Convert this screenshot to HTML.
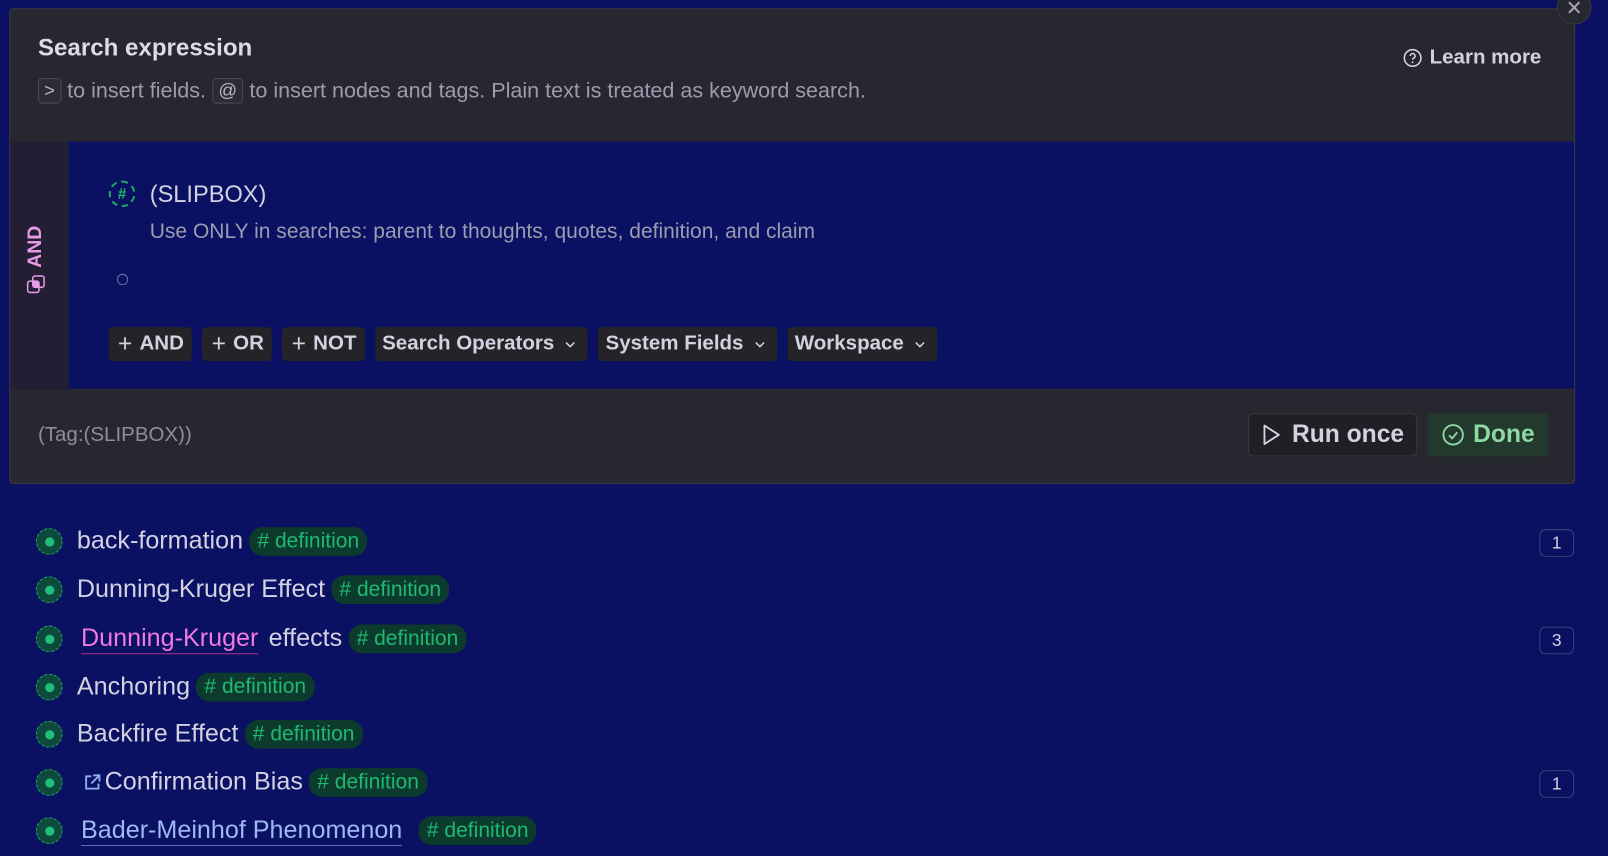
<!DOCTYPE html>
<html><head><meta charset="utf-8"><style>
*{box-sizing:border-box;margin:0;padding:0}
html,body{width:1608px;height:856px;overflow:hidden;background:#0a1062}
body{font-family:"Liberation Sans",sans-serif;color:#d4d2e0}
#w{position:absolute;left:0;top:0;width:1568px;height:835px;transform:scale(1.02551);transform-origin:0 0}
.panel{position:absolute;left:9px;top:8px;width:1527px;height:464px;background:#27272f;border:1px solid #3a3a44;border-radius:4px;overflow:hidden}
.hdr{position:absolute;left:27px;top:24px;font-size:23.5px;font-weight:bold;color:#dcdbe6}
.sub{position:absolute;left:27px;top:67px;font-size:21px;color:#9d9bb0;display:flex;align-items:center;gap:6px}
.kbd{display:inline-block;border:1px solid #4a4a55;border-radius:4px;padding:1px 5px;font-size:18px;color:#b9b7c6;background:#2c2c35}
.learn{position:absolute;right:32px;top:36px;font-size:20px;font-weight:bold;color:#d4d2e0;display:flex;align-items:center;gap:7px}
.blue{position:absolute;left:0;top:129px;width:1527px;height:241px;background:#0a1062}
.strip{position:absolute;left:0;top:0;width:57px;height:241px;background:#231e33}
.and{position:absolute;left:14px;top:82px;color:#e59be6;font-weight:bold;font-size:19px;writing-mode:vertical-rl;transform:rotate(180deg);display:flex;align-items:center}
.btns{position:absolute;left:96px;top:181px;display:flex;gap:10px}
.b{background:#232328;border-radius:4px;height:33px;padding:0 10px;font-size:20px;font-weight:bold;color:#d4d2e0;display:flex;align-items:center;gap:7px}
.b.pl{padding:0 8px 0 9px}
.b .p{font-weight:normal;font-size:24px}
.ch{width:14px;height:10px;margin-left:2px}
.foot{position:absolute;left:27px;top:404px;font-size:20px;color:#8e8ca0}
.run{position:absolute;left:1207px;top:394px;width:165px;height:42px;background:#1f1f25;border:1px solid #37373f;border-radius:5px;display:flex;align-items:center;justify-content:center;gap:10px;font-size:24px;font-weight:bold;color:#d4d2e0}
.done{position:absolute;left:1382px;top:394px;width:118px;height:42px;background:#213a2d;border-radius:5px;display:flex;align-items:center;justify-content:center;gap:9px;font-size:24px;font-weight:bold;color:#8fd8a4}
.row{position:absolute;left:35px;display:flex;align-items:center;font-size:24.5px;color:#d4d2e0;height:30px;white-space:nowrap}
.dot{width:26px;height:26px;border-radius:50%;background:#0e4a3c;border:1px dashed #1fa764;display:flex;align-items:center;justify-content:center;margin-right:14px;flex:none}
.dot i{width:9px;height:9px;border-radius:50%;background:#1dbf7a}
.tag{background:#0c3a2c;color:#1fb873;border-radius:13px;padding:2px 8px;font-size:20.5px;margin-left:6px}
.cnt{position:absolute;left:1501px;width:34px;height:27px;border:1px solid #3a3f7a;border-radius:6px;font-size:17px;display:flex;align-items:center;justify-content:center;color:#d4d2e0}
</style></head><body><div id="w">
<div class="panel">
<div class="hdr">Search expression</div>
<div class="sub"><span class="kbd">&gt;</span>to insert fields. <span class="kbd">@</span>to insert nodes and tags. Plain text is treated as keyword search.</div>
<div class="learn"><svg width="19" height="19" viewBox="0 0 20 20"><circle cx="10" cy="10" r="8.5" fill="none" stroke="#d4d2e0" stroke-width="1.6"/><path d="M7.5 8a2.5 2.5 0 1 1 3.5 2.3c-.7.3-1 .8-1 1.5" fill="none" stroke="#d4d2e0" stroke-width="1.6"/><circle cx="10" cy="14.5" r="1" fill="#d4d2e0"/></svg>Learn more</div>
<div class="blue">
<div class="strip"><div class="and"><svg width="20" height="20" viewBox="0 0 20 20" style="transform:rotate(90deg);margin-bottom:6px"><rect x="2" y="2" width="11" height="11" rx="2" fill="none" stroke="#e59be6" stroke-width="1.5"/><rect x="7" y="7" width="11" height="11" rx="2" fill="none" stroke="#e59be6" stroke-width="1.5"/><rect x="7" y="7" width="6" height="6" fill="#e59be6"/></svg>AND</div></div>
<div style="position:absolute;left:96px;top:38px;width:26px;height:26px;border-radius:50%;border:2px dashed #1fa764;color:#1fb873;font-size:15px;font-weight:bold;display:flex;align-items:center;justify-content:center">#</div>
<div style="position:absolute;left:136px;top:38px;font-size:23px;color:#d4d2e0">(SLIPBOX)</div>
<div style="position:absolute;left:136px;top:76px;font-size:20.5px;color:#9d9bb0">Use ONLY in searches: parent to thoughts, quotes, definition, and claim</div>
<div style="position:absolute;left:104px;top:129px;width:11px;height:11px;border-radius:50%;border:1px solid #6a6ea0"></div>
<div class="btns"><div class="b pl"><span class="p">+</span>AND</div><div class="b pl"><span class="p">+</span>OR</div><div class="b pl"><span class="p">+</span>NOT</div>
<div class="b" style="padding:0 10px 0 7px">Search Operators<svg class="ch" viewBox="0 0 14 10"><path d="M3 3l4 4 4-4" fill="none" stroke="#d4d2e0" stroke-width="1.5"/></svg></div>
<div class="b" style="padding:0 10px 0 7px">System Fields<svg class="ch" viewBox="0 0 14 10"><path d="M3 3l4 4 4-4" fill="none" stroke="#d4d2e0" stroke-width="1.5"/></svg></div>
<div class="b" style="padding:0 10px 0 7px">Workspace<svg class="ch" viewBox="0 0 14 10"><path d="M3 3l4 4 4-4" fill="none" stroke="#d4d2e0" stroke-width="1.5"/></svg></div></div>
</div>
<div class="foot">(Tag:(SLIPBOX))</div>
<div class="run"><svg width="20" height="22" viewBox="0 0 20 22"><path d="M3 2 L17 11 L3 20 Z" fill="none" stroke="#d4d2e0" stroke-width="1.8" stroke-linejoin="round"/></svg>Run once</div>
<div class="done"><svg width="22" height="22" viewBox="0 0 22 22"><circle cx="11" cy="11" r="9.5" fill="none" stroke="#8fd8a4" stroke-width="1.8"/><path d="M7 11.5l3 3 5-6" fill="none" stroke="#8fd8a4" stroke-width="1.8"/></svg>Done</div>
</div>
<div style="position:absolute;left:1518px;top:-10px;width:34px;height:34px;border-radius:50%;background:#27272f;border:1px solid #3a3a44;color:#a9a7b8;font-size:26px;display:flex;align-items:center;justify-content:center">×</div>
<div class="row" style="top:513px"><div class="dot"><i></i></div>back-formation<span class="tag"># definition</span></div>
<div class="row" style="top:560px"><div class="dot"><i></i></div>Dunning-Kruger Effect<span class="tag"># definition</span></div>
<div class="row" style="top:608px"><div class="dot"><i></i></div><span style="color:#f07ae0;border-bottom:1px solid #b03080;margin-left:4px;margin-right:10px">Dunning-Kruger</span>effects<span class="tag"># definition</span></div>
<div class="row" style="top:655px"><div class="dot"><i></i></div>Anchoring<span class="tag"># definition</span></div>
<div class="row" style="top:701px"><div class="dot"><i></i></div>Backfire Effect<span class="tag"># definition</span></div>
<div class="row" style="top:748px"><div class="dot"><i></i></div><svg width="20" height="20" viewBox="0 0 20 20" style="margin-left:5px;margin-right:2px"><path d="M9 4H4v12h12v-5M11 3h6v6M17 3l-8 8" fill="none" stroke="#8fb0f0" stroke-width="1.8"/></svg>Confirmation Bias<span class="tag"># definition</span></div>
<div class="row" style="top:795px"><div class="dot"><i></i></div><span style="color:#9db8f5;border-bottom:1px solid #5a70b0;margin-left:4px;margin-right:10px">Bader-Meinhof Phenomenon</span><span class="tag"># definition</span></div>
<div class="cnt" style="top:516px">1</div>
<div class="cnt" style="top:611px">3</div>
<div class="cnt" style="top:751px">1</div>
</div></body></html>
